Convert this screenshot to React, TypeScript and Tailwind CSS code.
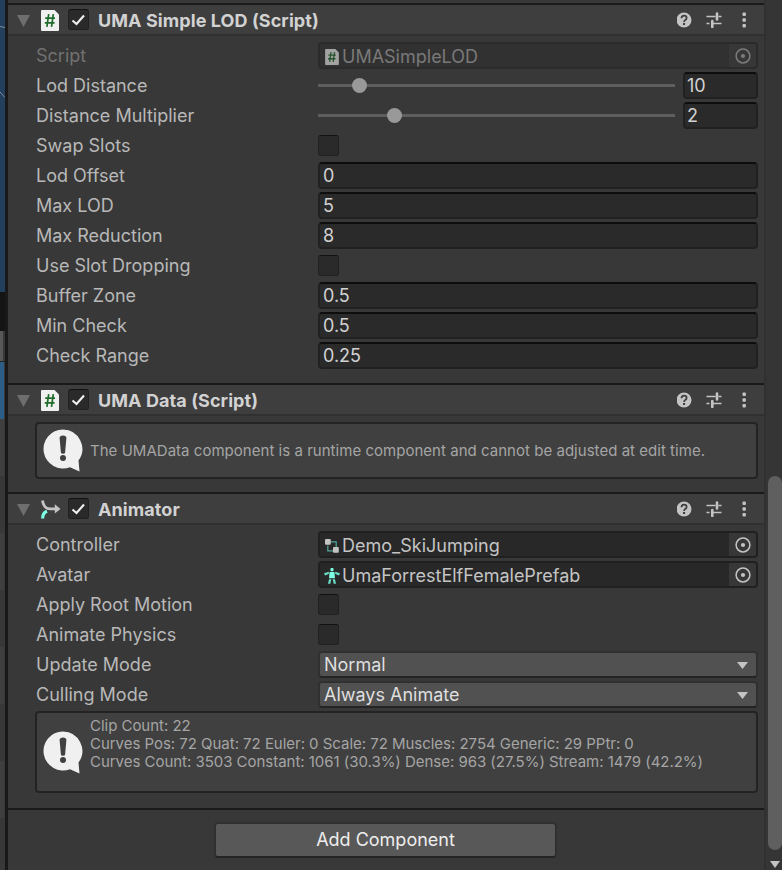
import React from 'react';

interface HeaderProps {
    title: string,
    icon: React.ReactNode
}

interface RowProps {
    label: string,
    dimmed?: boolean,
    children: React.ReactNode
}

interface ObjectFieldProps {
    name: string,
    icon: React.ReactNode,
    disabled?: boolean
}

const ScriptIcon: React.FC<{ className: string }> = ({ className }) => (
    <svg viewBox="0 0 18 21" className={className}>
        <path d="M1 0H13.5L18 4.5V20Q18 21 17 21H1Q0 21 0 20V1Q0 0 1 0Z" fill="#f0f0f0" />
        <path d="M7.7 4.2L5.9 16.8M12.3 4.2L10.5 16.8M4.2 8.1H14M3.8 12.8H13.6" stroke="#1f6b2a" strokeWidth="1.7" fill="none" />
    </svg>
);

const AnimatorIcon = () => (
    <svg viewBox="0 0 20 20" className="w-5 h-5">
        <path d="M1.5 0.5C2 5 4.5 8.9 9 8.9H15" stroke="#c4c4c4" strokeWidth="2.8" fill="none" />
        <path d="M13.8 4.2L19.5 8.9L13.8 13.6Z" fill="#c4c4c4" />
        <path d="M1.6 18.5C1.6 15 3 12.5 6 11.3" stroke="#7dffe5" strokeWidth="3.2" fill="none" />
    </svg>
);

const ControllerIcon = () => (
    <svg viewBox="0 0 14 14" className="w-3.5 h-3.5">
        <path d="M6 2.8H11.2V8M2.8 6.5V11.8H8" stroke="#4fa898" strokeWidth="1.2" fill="none" />
        <rect x="0" y="0" width="5.8" height="5.8" rx="1" fill="#c4c4c4" />
        <rect x="8" y="8" width="5.8" height="5.8" rx="1" fill="#c4c4c4" />
    </svg>
);

const AvatarIcon = () => (
    <svg viewBox="0 0 16 16" className="w-4 h-4">
        <g fill="#7dffe5">
            <rect x="6.5" y="0" width="3" height="3.2" rx="0.8" />
            <path d="M5.6 4H10.4L11 10.3H5Z" />
            <path d="M5 11.2H7.3L6.3 15.8H4Z M8.7 11.2H11L12 15.8H9.7Z" fill="#69dcc7" />
            <path d="M4.8 3.7V5.9L1 7.4L0 5.3ZM11.2 3.7V5.9L15 7.4L16 5.3Z" fill="#69dcc7" />
        </g>
    </svg>
);

const InfoIcon = () => (
    <svg viewBox="0 0 40 43" className="w-10 h-[43px] shrink-0">
        <path d="M20 .5A19.5 19.5 0 1 0 27 38.2L36.5 42.5L35.5 31.5A19.5 19.5 0 0 0 20 .5Z" fill="#f0f0f0" />
        <path d="M16.6 9Q16.6 6.5 20 6.5Q23.4 6.5 23.4 9L22.1 23.4Q21.9 24.8 20 24.8Q18.1 24.8 17.9 23.4Z" fill="#404040" />
        <circle cx="20" cy="29" r="3" fill="#404040" />
    </svg>
);

const Checkbox: React.FC<{ checked?: boolean }> = ({ checked }) => (
    <div className="flex items-center justify-center w-[21px] h-[21px] rounded-[3px] border border-[#212121] border-t-[#121212] bg-[#2a2a2a]">
        {checked && (
            <svg viewBox="0 0 15 12" className="w-[15px] h-3 shrink-0">
                <path d="M1.5 6.5L5.5 10L13 1.5" stroke="#f0f0f0" strokeWidth="2.1" fill="none" />
            </svg>
        )}
    </div>
);

const Header: React.FC<HeaderProps> = ({ title, icon }) => (
    <div className="flex items-center h-[33px] border-t-2 border-t-[#1a1a1a] border-b-2 border-b-[#303030] bg-[#3e3e3e] pl-[9px] pr-[17px]">
        <svg viewBox="0 0 13 12" className="w-[13px] h-3 mt-0.5">
            <path d="M0 0H13L6.5 12Z" fill="#6e6e6e" />
        </svg>
        <div className="flex items-center ml-[11px] w-[27px] pt-0.5">{icon}</div>
        <Checkbox checked />
        <span className="ml-[9px] text-[18px] leading-[29px] pt-0.5 font-bold text-[#d2d2d2] tracking-[0.08px]">{title}</span>
        <svg viewBox="0.5 0 70 16" className="ml-auto w-[70px] h-4 mt-px">
            <circle cx="7.5" cy="8" r="7.5" fill="#c4c4c4" />
            <path d="M5 6.3Q5 3.7 7.6 3.7Q10.1 3.7 10.1 6Q10.1 7.3 8.7 8Q7.6 8.6 7.6 10" stroke="#3e3e3e" strokeWidth="1.8" fill="none" />
            <rect x="6.5" y="11" width="2.1" height="2" fill="#3e3e3e" />
            <path d="M30 4.5H39M42 4.5H45M30 11.5H33M36 11.5H45" stroke="#c4c4c4" strokeWidth="1.5" />
            <path d="M40.5 1.5V7.5M35.8 9V15" stroke="#c4c4c4" strokeWidth="2.6" strokeLinecap="round" />
            <g fill="#c4c4c4">
                <rect x="66" y="0.5" width="3.4" height="3.4" rx="1" />
                <rect x="66" y="6.3" width="3.4" height="3.4" rx="1" />
                <rect x="66" y="12.1" width="3.4" height="3.4" rx="1" />
            </g>
        </svg>
    </div>
);

const Row: React.FC<RowProps> = ({ label, dimmed, children }) => (
    <div className="flex items-center h-[27px]">
        <span className={`w-[282px] shrink-0 whitespace-nowrap pt-px ${dimmed ? 'text-[#717171]' : 'text-[#b8b8b8]'}`}>{label}</span>
        <div className="flex items-center w-[440px]">{children}</div>
    </div>
);

const NumberField: React.FC<{ value: string, width?: string }> = ({ value, width = 'w-[440px] pl-[3px]' }) => (
    <div className={`h-[27px] shrink-0 rounded-[4px] border-2 border-[#212121] border-t-[#0d0d0d] bg-[#2a2a2a] leading-[24px] text-[#d2d2d2] ${width}`}>{value}</div>
);

const Slider: React.FC<{ value: string, offset: number }> = ({ value, offset }) => (
    <>
        <div className="relative w-[357px] h-[3px] mr-2 bg-[#5e5e5e]">
            <div className="absolute -top-[6px] w-[15px] h-[15px] rounded-full bg-[#999999]" style={{ left: offset }} />
        </div>
        <NumberField value={value} width="w-[75px] pl-0.5" />
    </>
);

const ObjectField: React.FC<ObjectFieldProps> = ({ name, icon, disabled }) => (
    <div className={`flex w-[440px] h-[27px] rounded-[4px] border-2 overflow-hidden ${disabled ? 'border-[#2b2b2b] bg-[#313131]' : 'border-[#202020] bg-[#282828]'}`}>
        <div className={`flex items-center justify-center w-4 ml-1 pt-0.5 ${disabled ? 'opacity-60' : ''}`}>{icon}</div>
        <span className={`ml-[2px] pt-px leading-[24px] ${disabled ? 'text-[#797979]' : 'text-[#c4c4c4]'}`}>{name}</span>
        <div className="flex items-center justify-center ml-auto w-[27px] bg-[#373737]">
            <svg viewBox="0 0 16 16" className={`w-4 h-4 mt-px ${disabled ? 'text-[#7b7b7b]' : 'text-[#c4c4c4]'}`}>
                <circle cx="8" cy="8" r="6.9" stroke="currentColor" strokeWidth="1.5" fill="none" />
                <circle cx="8" cy="8" r="2.1" fill="currentColor" />
            </svg>
        </div>
    </div>
);

const Dropdown: React.FC<{ value: string }> = ({ value }) => (
    <div className="flex items-center w-[440px] h-[27px] rounded-[4px] border-2 border-[#303030] border-b-[#242424] bg-[#515151] pl-1 pr-2 text-[#dfdfdf]">
        <span>{value}</span>
        <svg viewBox="0 0 11 7" className="ml-auto w-[11px] h-[7px] mt-0.5">
            <path d="M0 0H11L5.5 7Z" fill="#c4c4c4" />
        </svg>
    </div>
);

const HelpBox: React.FC<{ lines: string[], style: string }> = ({ lines, style }) => (
    <div className={`flex items-center w-[723px] -ml-px rounded-[4px] border-2 border-[#232323] bg-[#404040] pl-1.5 ${style}`}>
        <InfoIcon />
        <div className="ml-[7px] text-[15px] leading-[18px] whitespace-nowrap text-[#a5a5a5]">
            {lines.map((line, index) => (
                <div key={index}>{line}</div>
            ))}
        </div>
    </div>
);

const numberRows = [
    { label: 'Lod Offset', value: '0' },
    { label: 'Max LOD', value: '5' },
    { label: 'Max Reduction', value: '8' }
];

const checkRows = [
    { label: 'Buffer Zone', value: '0.5' },
    { label: 'Min Check', value: '0.5' },
    { label: 'Check Range', value: '0.25' }
];

const clipInfo = [
    'Clip Count: 22',
    'Curves Pos: 72 Quat: 72 Euler: 0 Scale: 72 Muscles: 2754 Generic: 29 PPtr: 0',
    'Curves Count: 3503 Constant: 1061 (30.3%) Dense: 963 (27.5%) Stream: 1479 (42.2%)'
];

// edge of the neighbouring scene view and project list
const SidePanel = () => (
    <div className="flex flex-col w-2 shrink-0 border-r-[3px] border-[#191919] bg-[#383838]">
        <svg viewBox="0 0 5 292" className="w-[5px] h-[292px] bg-[#233f5e]">
            <path d="M0 26.5L5 27.5M0 92L5 97.5" stroke="#7f8d9b" strokeWidth="1" />
        </svg>
        <div className="h-[39px] bg-[#141414]" />
        <div className="h-[30px] border-r-2 border-[#383838] bg-[#585858]" />
        <div className="h-px bg-[#222222]" />
        <div className="h-[57px] w-1 bg-[#2c5d87]" />
        <div className="h-[57px] w-1 bg-[#3f3f3f]" />
        <div className="h-[57px]" />
        <div className="h-[57px] w-1 bg-[#3f3f3f]" />
        <div className="h-[57px]" />
        <div className="h-[57px] w-1 bg-[#3f3f3f]" />
        <div className="h-[57px]" />
        <div className="h-[57px] w-1 bg-[#3f3f3f]" />
    </div>
);

const Scrollbar = () => (
    <div className="flex flex-col items-end w-[18px] shrink-0 border-l-2 border-[#303030] bg-[#353535]">
        <div className="w-[14px] h-[374px] mt-[476px] rounded-[7px] bg-[#5f5f5f]" />
        <svg viewBox="0 0 10 7" className="w-2.5 h-[7px] mt-[11px] mr-0.5">
            <path d="M0 0H10L5 7Z" fill="#c4c4c4" />
        </svg>
    </div>
);

const App = () => {
    return (
        <div className="flex w-[782px] h-[870px] overflow-hidden bg-[#383838] font-['Inter',sans-serif] text-[18px] leading-[24px]">
            <SidePanel />
            <main className="w-[756px] shrink-0 pt-[3px]">
                <Header title="UMA Simple LOD (Script)" icon={<ScriptIcon className="w-[18px] h-[21px]" />} />
                <section className="flex flex-col gap-[3px] h-[347px] pt-1.5 pl-7">
                    <Row label="Script" dimmed>
                        <ObjectField name="UMASimpleLOD" icon={<ScriptIcon className="w-[14px] h-4" />} disabled />
                    </Row>
                    <Row label="Lod Distance"><Slider value="10" offset={34} /></Row>
                    <Row label="Distance Multiplier"><Slider value="2" offset={69} /></Row>
                    <Row label="Swap Slots"><Checkbox /></Row>
                    {numberRows.map((row) => (
                        <Row key={row.label} label={row.label}><NumberField value={row.value} /></Row>
                    ))}
                    <Row label="Use Slot Dropping"><Checkbox /></Row>
                    {checkRows.map((row) => (
                        <Row key={row.label} label={row.label}><NumberField value={row.value} /></Row>
                    ))}
                </section>

                <Header title="UMA Data (Script)" icon={<ScriptIcon className="w-[18px] h-[21px]" />} />
                <section className="h-[76px] pt-1.5 pl-7">
                    <HelpBox lines={['The UMAData component is a runtime component and cannot be adjusted at edit time.']} style="h-[57px] tracking-[0.03px] [&>div]:mt-px" />
                </section>

                <Header title="Animator" icon={<AnimatorIcon />} />
                <section className="flex flex-col gap-[3px] h-[283px] pt-1.5 pl-7">
                    <Row label="Controller"><ObjectField name="Demo_SkiJumping" icon={<ControllerIcon />} /></Row>
                    <Row label="Avatar"><ObjectField name="UmaForrestElfFemalePrefab" icon={<AvatarIcon />} /></Row>
                    <Row label="Apply Root Motion"><Checkbox /></Row>
                    <Row label="Animate Physics"><Checkbox /></Row>
                    <Row label="Update Mode"><Dropdown value="Normal" /></Row>
                    <Row label="Culling Mode"><Dropdown value="Always Animate" /></Row>
                    <HelpBox lines={clipInfo} style="h-[82px] pt-px tracking-[-0.03px] [&>div]:-mt-[18px]" />
                </section>

                <footer className="flex justify-center border-t-2 border-[#1a1a1a] pt-3 pr-px">
                    <button className="w-[343px] h-9 rounded-[4px] border-2 border-[#303030] border-b-[#242424] bg-[#585858] text-[#eeeeee]">Add Component</button>
                </footer>
            </main>
            <Scrollbar />
        </div>
    );
};

export default App;
